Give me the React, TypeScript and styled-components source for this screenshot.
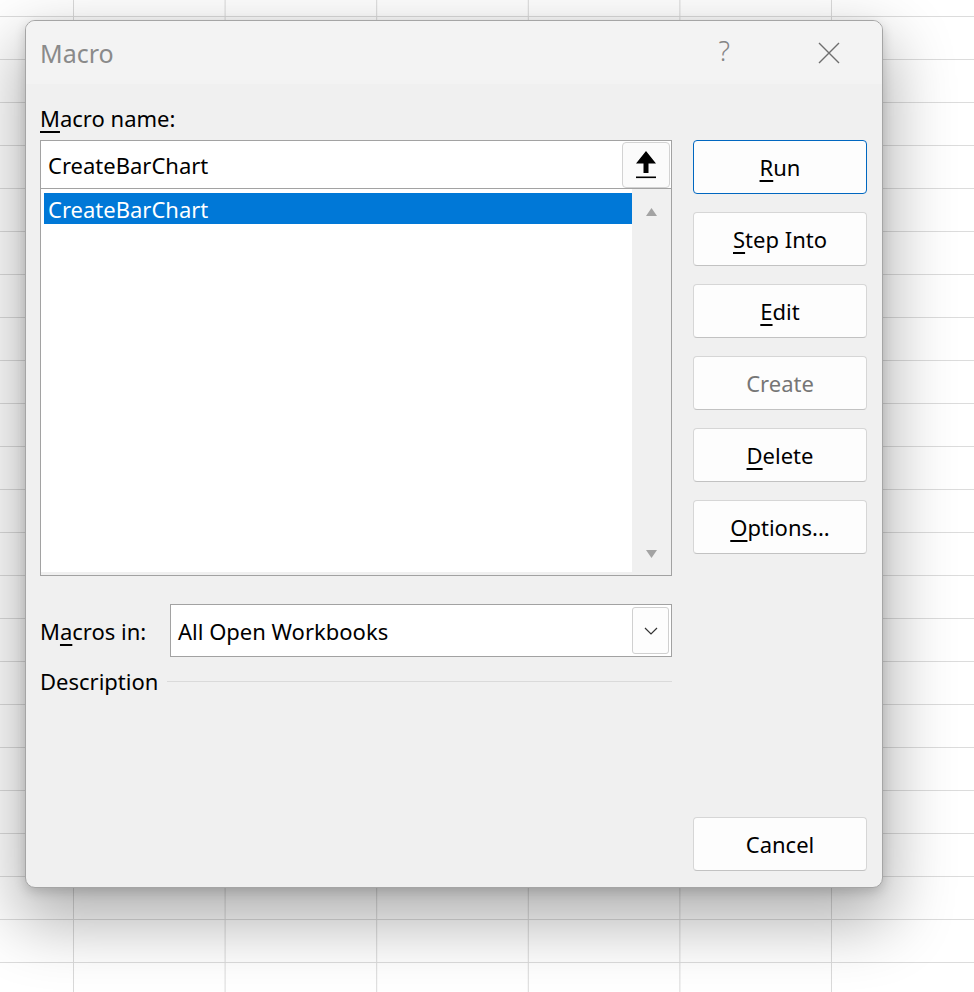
import React from "react";
import styled, { createGlobalStyle } from "styled-components";

const GlobalStyle = createGlobalStyle`
  html, body {
    margin: 0;
    height: 100%;
  }
  body {
    font-family: "Noto Sans", "Open Sans", sans-serif;
    color: #000;
  }
`;

const buttons = [
  { key: "R", rest: "un", primary: true },
  { key: "S", rest: "tep Into" },
  { key: "E", rest: "dit" },
  { key: "", rest: "Create", disabled: true },
  { key: "D", rest: "elete" },
  { key: "O", rest: "ptions..." },
];

const UploadIcon = () => (
  <svg width="22" height="28" viewBox="0 0 22 28">
    <path d="M11 0 L21 12.5 L13.5 12.5 L13.5 22 L8.5 22 L8.5 12.5 L1 12.5 Z" fill="#000" />
    <rect x="1" y="25.5" width="20" height="1.6" fill="#000" />
  </svg>
);

const CloseIcon = () => (
  <svg width="22" height="22" viewBox="0 0 22 22">
    <path d="M1 1 L21 21 M21 1 L1 21" stroke="#6e6e6e" strokeWidth="1.4" />
  </svg>
);

const Chevron = () => (
  <svg width="14" height="8" viewBox="0 0 14 8">
    <path d="M1 1 L7 7 L13 1" stroke="#333" strokeWidth="1.2" fill="none" />
  </svg>
);

const Triangle: React.FC<{ down?: boolean }> = ({ down }) => (
  <svg width="11" height="8" viewBox="0 0 11 8">
    <path d={down ? "M0 0 L11 0 L5.5 8 Z" : "M5.5 0 L11 8 L0 8 Z"} fill="#a3a3a3" />
  </svg>
);

export default function App() {
  return (
    <Sheet>
      <GlobalStyle />
      <Dialog>
        <TitleBar>
          <Title>Macro</Title>
          <TitleActions>
            <Help>?</Help>
            <CloseIcon />
          </TitleActions>
        </TitleBar>

        <Body>
          <LeftColumn>
            <Label>
              <Key>M</Key>acro name:
            </Label>
            <NameInput>
              <InputText>CreateBarChart</InputText>
              <UploadButton>
                <UploadIcon />
              </UploadButton>
            </NameInput>
            <MacroList>
              <ListItems>
                <ListItem selected>CreateBarChart</ListItem>
              </ListItems>
              <Scrollbar>
                <Triangle />
                <Triangle down />
              </Scrollbar>
            </MacroList>

            <MacrosInRow>
              <Label>
                M<Key>a</Key>cros in:
              </Label>
              <Select>
                <InputText>All Open Workbooks</InputText>
                <SelectButton>
                  <Chevron />
                </SelectButton>
              </Select>
            </MacrosInRow>

            <DescriptionRow>
              <Label>Description</Label>
              <Rule />
            </DescriptionRow>
          </LeftColumn>

          <RightColumn>
            {buttons.map((b) => (
              <DialogButton
                key={b.rest}
                $primary={b.primary}
                $disabled={b.disabled}
              >
                {b.key && <Key>{b.key}</Key>}
                {b.rest}
              </DialogButton>
            ))}
            <CancelButton>Cancel</CancelButton>
          </RightColumn>
        </Body>
      </Dialog>
    </Sheet>
  );
}

const Sheet = styled.div`
  min-height: 100vh;
  box-sizing: border-box;
  padding: 20px 0 0 25px;
  background-color: #ffffff;
  background-image: linear-gradient(to right, #d9d9d9 1px, transparent 1px),
    linear-gradient(to bottom, #dcdcdc 1px, transparent 1px);
  background-size: 151.6px 43px;
  background-position: 73px 16px;
`;

const Dialog = styled.div`
  width: 858px;
  height: 868px;
  box-sizing: border-box;
  display: flex;
  flex-direction: column;
  background: #f0f0f0;
  border: 1px solid #a5a5a5;
  border-radius: 10px;
  box-shadow: 0 28px 64px 8px rgba(0, 0, 0, 0.3), 0 4px 12px rgba(0, 0, 0, 0.16);
  overflow: hidden;
`;

const TitleBar = styled.div`
  height: 63px;
  display: flex;
  align-items: center;
  justify-content: space-between;
  padding: 0 42px 0 14px;
  background: #f3f3f3;
`;

const Title = styled.div`
  font-size: 25px;
  color: #8a8a8a;
  margin-top: 1px;
`;

const TitleActions = styled.div`
  display: flex;
  align-items: center;
  gap: 88px;
`;

const Help = styled.span`
  font-size: 27px;
  font-weight: 300;
  color: #858585;
  margin-top: -4px;
`;

const Body = styled.div`
  flex: 1;
  display: flex;
  gap: 21px;
  padding: 19px 15px 16px 14px;
`;

const LeftColumn = styled.div`
  width: 632px;
  display: flex;
  flex-direction: column;
`;

const RightColumn = styled.div`
  width: 174px;
  display: flex;
  flex-direction: column;
  gap: 18px;
  padding-top: 37px;
`;

const Label = styled.div`
  font-size: 22px;
  line-height: 30px;
  white-space: nowrap;
`;

const Key = styled.span`
  text-decoration: underline;
  text-underline-offset: 4px;
  text-decoration-thickness: 2px;
`;

const NameInput = styled.div`
  margin-top: 7px;
  height: 48px;
  box-sizing: border-box;
  display: flex;
  align-items: center;
  justify-content: space-between;
  background: #fff;
  border: 1px solid #a2a2a2;
  border-bottom: none;
  padding: 0 1px 0 7px;
`;

const InputText = styled.span`
  font-size: 22px;
`;

const UploadButton = styled.div`
  width: 48px;
  height: 46px;
  box-sizing: border-box;
  display: flex;
  align-items: center;
  justify-content: center;
  background: #fbfbfb;
  border: 1px solid #d3d3d3;
  border-radius: 4px;
`;

const MacroList = styled.div`
  height: 388px;
  box-sizing: border-box;
  display: flex;
  border: 1px solid #a2a2a2;
  background: #f0f0f0;
`;

const ListItems = styled.div`
  flex: 1;
  margin-bottom: 3px;
  padding: 4px 0 0 3px;
  background: #fff;
`;

const ListItem = styled.div<{ selected?: boolean }>`
  height: 31px;
  display: flex;
  align-items: center;
  padding-left: 4px;
  font-size: 22px;
  background: ${(p) => (p.selected ? "#0078d7" : "transparent")};
  color: ${(p) => (p.selected ? "#fff" : "#000")};
`;

const Scrollbar = styled.div`
  width: 39px;
  display: flex;
  flex-direction: column;
  align-items: center;
  justify-content: space-between;
  padding: 19px 0 17px;
`;

const MacrosInRow = styled.div`
  margin-top: 28px;
  display: flex;
  align-items: center;
  justify-content: space-between;
`;

const Select = styled.div`
  width: 502px;
  height: 53px;
  box-sizing: border-box;
  display: flex;
  align-items: center;
  justify-content: space-between;
  background: #fff;
  border: 1px solid #a2a2a2;
  padding: 0 2px 0 7px;
`;

const SelectButton = styled.div`
  width: 37px;
  height: 47px;
  box-sizing: border-box;
  display: flex;
  align-items: center;
  justify-content: center;
  background: #fdfdfd;
  border: 1px solid #d0d0d0;
  border-radius: 3px;
`;

const DescriptionRow = styled.div`
  margin-top: 9px;
  display: flex;
  align-items: center;
  gap: 9px;
`;

const Rule = styled.div`
  flex: 1;
  height: 1px;
  background: #dadada;
`;

const DialogButton = styled.div<{ $primary?: boolean; $disabled?: boolean }>`
  height: 54px;
  box-sizing: border-box;
  display: flex;
  align-items: center;
  justify-content: center;
  font-size: 22px;
  background: #fdfdfd;
  border: 1px solid ${(p) => (p.$primary ? "#0067c0" : "#d6d6d6")};
  border-bottom-color: ${(p) => (p.$primary ? "#0067c0" : "#c2c2c2")};
  border-radius: 4px;
  color: ${(p) => (p.$disabled ? "#767676" : "#000")};
`;

const CancelButton = styled(DialogButton)`
  margin-top: auto;
`;
